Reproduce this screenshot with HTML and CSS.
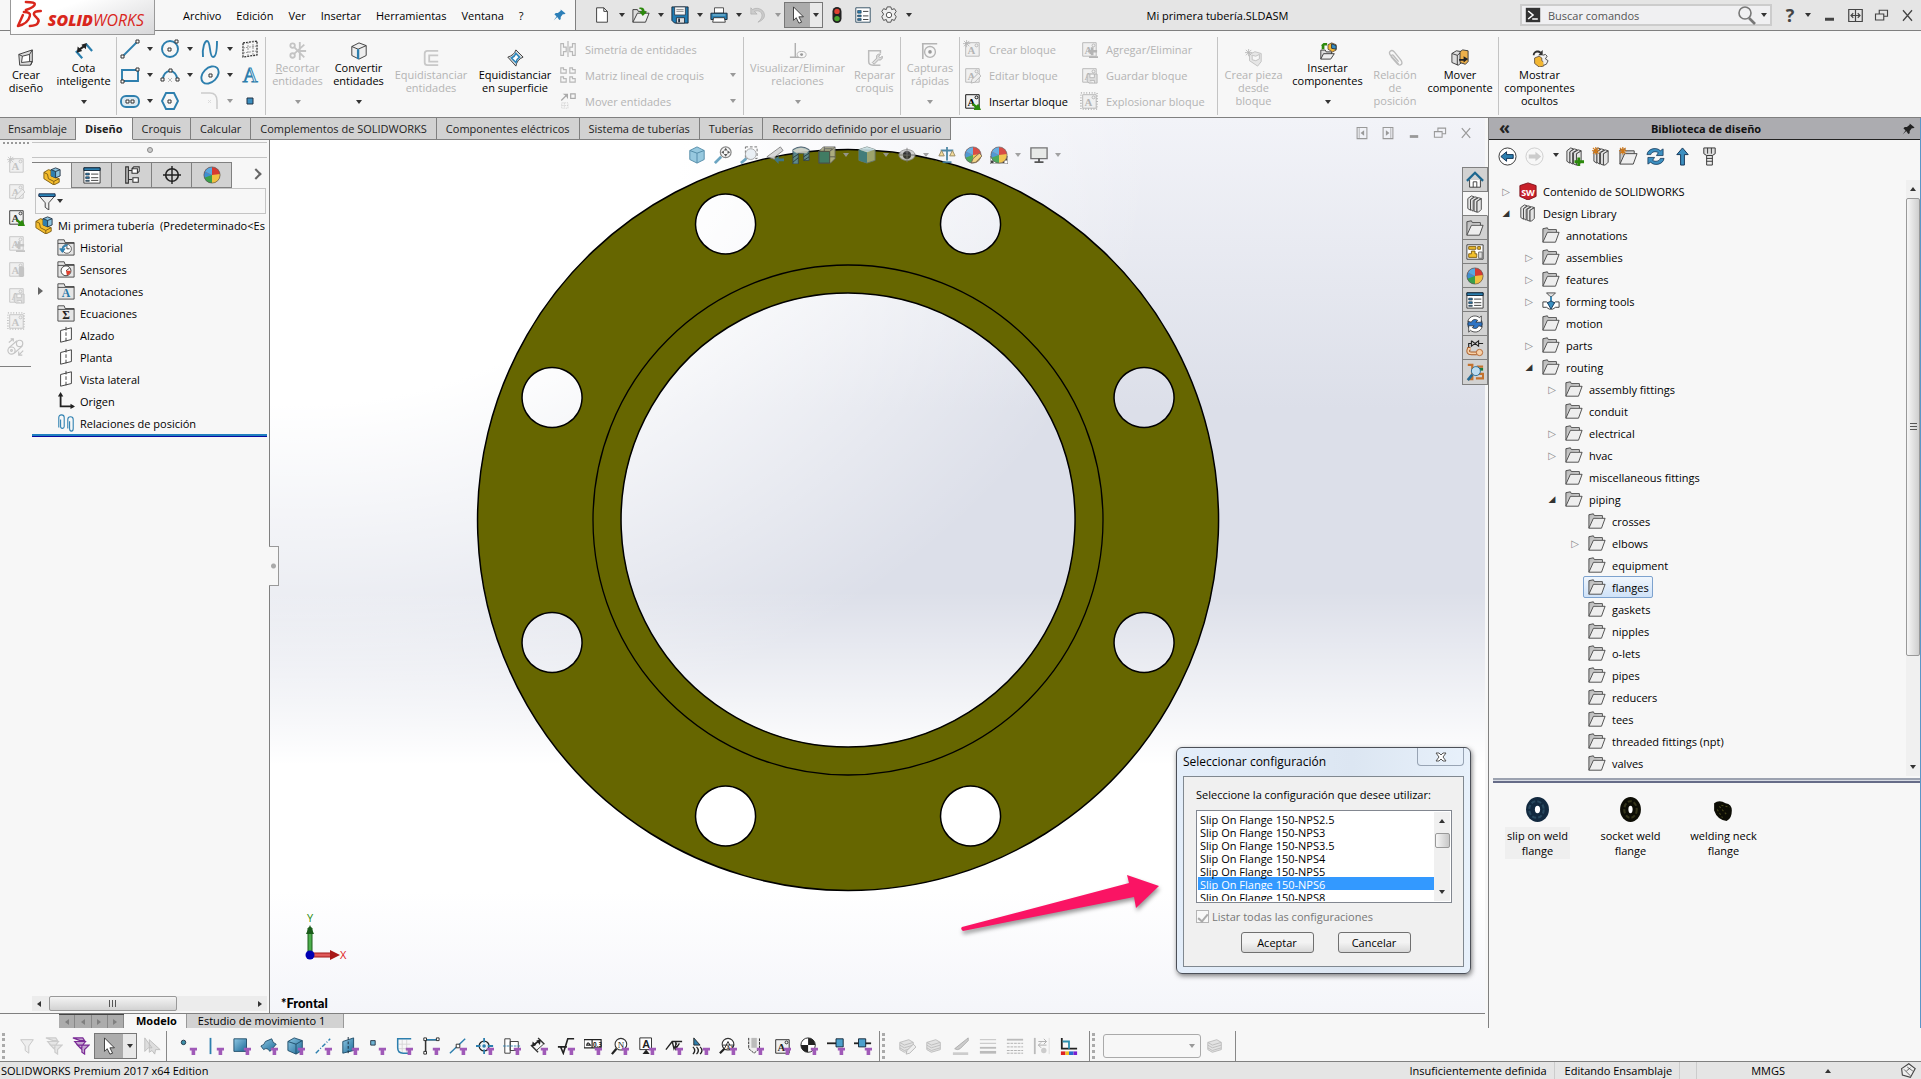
FILE: index.html
```html
<!DOCTYPE html>
<html lang="es">
<head>
    <meta charset="UTF-8">
    <meta name="viewport" content="width=device-width, initial-scale=1.0">
    <title>Mi primera tubería.SLDASM</title>
    <link rel="stylesheet" href="styles.css">
</head>
<body>

<svg class="gradients" aria-hidden="true">
  <defs>
    <linearGradient id="gblue" x1="0" y1="0" x2="1" y2="1"><stop offset="0" stop-color="#8fc8e4"/><stop offset="1" stop-color="#1c6a97"/></linearGradient>
    <linearGradient id="ggray" x1="0" y1="0" x2="1" y2="1"><stop offset="0" stop-color="#b5b5b5"/><stop offset="1" stop-color="#f4f4f4"/></linearGradient>
  </defs>
</svg>

<!-- icon sprite -->
<svg class="sprite" aria-hidden="true">
  <symbol id="pin" viewBox="0 0 20 20"><path d="M11 2l7 6-2 1-2 0-3 4 0 3-2 1-3-4-5 5 4-6-3-3 2-2h3l4-3z" fill="currentColor"/></symbol>
  <symbol id="new" viewBox="0 0 20 20"><path d="M4 2h8l4 4v12H4z" fill="#fff" stroke="#333"/><path d="M12 2v4h4" fill="none" stroke="#333"/></symbol>
  <symbol id="open" viewBox="0 0 20 20"><path d="M1 18V4h5l1 2h8v3" fill="#ddd" stroke="#333"/><path d="M1 18l5-10h13l-4 10z" fill="#eee" stroke="#333"/><path d="M8 2c4-1 6 1 6 4h3l-5 5-4-5h3c0-2-1-3-3-3z" fill="#2c8a0c"/></symbol>
  <symbol id="save" viewBox="0 0 20 20"><path d="M1 1h18v18H4l-3-3z" fill="#1f7cb4" stroke="#123"/><path d="M4 1h12v9H4z" fill="#f5f5f5" stroke="#345"/><path d="M6 4h8M6 6h8" stroke="#888"/><path d="M6 13h9v6H6z" fill="#ddd" stroke="#234"/><path d="M8 14h2v4H8z" fill="#234"/></symbol>
  <symbol id="print" viewBox="0 0 20 20"><path d="M5 2h10v6H5z" fill="#fff" stroke="#444"/><path d="M1 8h18v7H1z" fill="#2a80b3" stroke="#123"/><path d="M4 13h12l1 5H3z" fill="#fff" stroke="#333"/><path d="M3 10h14" stroke="#9cd"/></symbol>
  <symbol id="undo" viewBox="0 0 20 20"><path d="M2 2v7h7L6 6c5-2 10 1 8 7-1 2-2 3-4 5 5-2 8-5 7-9-1-6-9-8-13-5z" fill="#ccc" stroke="#aaa" stroke-width=".7"/></symbol>
  <symbol id="cursor" viewBox="0 0 20 20"><path d="M5 1v15l3-3 3 6 3-1-3-6h5z" fill="#fff" stroke="#333"/></symbol>
  <symbol id="traffic" viewBox="0 0 20 20"><rect x="5" y="1" width="10" height="18" rx="5" fill="#222"/><circle cx="10" cy="6" r="3" fill="#e04030"/><circle cx="10" cy="14" r="3" fill="#4aa62e"/></symbol>
  <symbol id="props" viewBox="0 0 20 20"><path d="M2 2h16v16H2z" fill="#fff" stroke="#2b4a5e"/><path d="M4 5h4v3H4zM4 10h4v2H4zM4 14h4v2H4z" fill="#2c7fb0" stroke="#123" stroke-width=".6"/><path d="M10 6h6M10 11h6M10 15h6" stroke="#333"/></symbol>
  <symbol id="gear" viewBox="0 0 20 20"><path d="M8 1h4l1 3 3-1 2 3-2 3 2 3-2 4-3-1-1 3H8l-1-3-3 1-2-4 2-3-2-3 2-3 3 1z" fill="#eee" stroke="#444"/><circle cx="10" cy="10" r="3" fill="#fff" stroke="#444"/></symbol>
  <symbol id="mag" viewBox="0 0 20 20"><circle cx="8" cy="8" r="6" fill="none" stroke="#777" stroke-width="1.6"/><path d="M12 13l6 6" stroke="#777" stroke-width="2.6"/></symbol>
  <symbol id="cmd" viewBox="0 0 20 20"><path d="M1 1h18v18H1z" fill="#333"/><path d="M4 5l6 5-6 5M9 15h7" fill="none" stroke="#fff" stroke-width="2"/></symbol>
  <symbol id="wmin" viewBox="0 0 20 20"><path d="M4 13h12v4H4z" fill="currentColor"/></symbol>
  <symbol id="wrest" viewBox="0 0 20 20"><path d="M7 8V3h11v8h-5M2 8h11v8H2z" fill="none" stroke="currentColor" stroke-width="1.5"/></symbol>
  <symbol id="wclose" viewBox="0 0 20 20"><path d="M4 3l12 14M16 3L4 17" stroke="currentColor" stroke-width="1.7"/></symbol>
  <symbol id="wspan" viewBox="0 0 20 20"><path d="M1 2h18v16H1zM10 2v16M4 10h12M7 7l-3 3 3 3M13 7l3 3-3 3" fill="none" stroke="currentColor" stroke-width="1.6"/></symbol>
  <symbol id="wleft" viewBox="0 0 20 20"><path d="M3 2h14v16H3z" fill="none" stroke="currentColor" stroke-width="1.5"/><path d="M6 3v14" stroke="currentColor"/><path d="M13 6v8l-5-4z" fill="currentColor"/></symbol>
  <symbol id="wright" viewBox="0 0 20 20"><path d="M3 2h14v16H3z" fill="none" stroke="currentColor" stroke-width="1.5"/><path d="M14 3v14" stroke="currentColor"/><path d="M7 6v8l5-4z" fill="currentColor"/></symbol>

  <!-- ribbon -->
  <symbol id="sketch" viewBox="0 0 20 20"><path d="M2 6l15-5v13l-2 4H3z" fill="#ddd" stroke="#333"/><path d="M6 8l8-2v8l-9 1z" fill="#fff" stroke="#333"/><path d="M15 18l2-4-3 0M2 6l4 2M17 1l-3 5" stroke="#333" fill="none"/></symbol>
  <symbol id="dim" viewBox="0 0 20 20"><path d="M1 10l7 8M12 2l7 8" stroke="#2b7fae" stroke-width="2.4"/><path d="M4 9l7-5" stroke="#222" stroke-width="2.4"/><path d="M2 12l1-7 5 5zM13 1l-1 7-5-5z" fill="#222"/></symbol>
  <symbol id="line" viewBox="0 0 20 20"><path d="M3 17L17 3" stroke="#2d7fae" stroke-width="1.8"/><path d="M1 16h3v3H1zM16 1h3v3h-3z" fill="#fff" stroke="#333"/></symbol>
  <symbol id="circle" viewBox="0 0 20 20"><circle cx="10" cy="10" r="8" fill="none" stroke="#2d7fae" stroke-width="1.9"/><path d="M8 9h3v3H8zM15 1h3v3h-3z" fill="#fff" stroke="#333"/></symbol>
  <symbol id="spline" viewBox="0 0 20 20"><path d="M3 18C2 8 5 2 7 2c4 0 2 16 6 16 3 0 4-8 4-16" fill="none" stroke="#2d7fae" stroke-width="1.9"/></symbol>
  <symbol id="plane" viewBox="0 0 20 20"><path d="M3 4l14-2v14L3 18z" fill="none" stroke="#333" stroke-width="1.3" stroke-dasharray="2 1"/><path d="M8 3v15M13 2v15M3 9l14-2M3 14l14-2" fill="none" stroke="#999" stroke-dasharray="2 1"/></symbol>
  <symbol id="rect" viewBox="0 0 20 20"><path d="M2 5h16v11H2z" fill="none" stroke="#2d7fae" stroke-width="1.9"/><path d="M1 15h3v3H1zM16 3h3v3h-3z" fill="#fff" stroke="#333"/></symbol>
  <symbol id="arc" viewBox="0 0 20 20"><path d="M3 14a7 8 0 0 1 14 0" fill="none" stroke="#2d7fae" stroke-width="1.9"/><path d="M1 13h3v3H1zM16 13h3v3h-3zM9 4h3v3H9z" fill="#fff" stroke="#333"/><path d="M8 13l4 4M12 13l-4 4" stroke="#bbb"/></symbol>
  <symbol id="ellipse" viewBox="0 0 20 20"><ellipse cx="10" cy="10" rx="10" ry="7" transform="rotate(-45 10 10)" fill="none" stroke="#2d7fae" stroke-width="1.9"/><path d="M9 9h3v3H9z" fill="#fff" stroke="#333"/></symbol>
  <symbol id="letter" viewBox="0 0 20 20"><text x="10" y="17" text-anchor="middle" font-size="21" font-family="Liberation Serif, serif" fill="#fff" stroke="#2d7fae">A</text></symbol>
  <symbol id="slot" viewBox="0 0 20 20"><rect x="1" y="5" width="18" height="11" rx="5" fill="#dceaf2" stroke="#2d7fae" stroke-width="1.9"/><path d="M6 9h3v3H6zM11 9h3v3h-3z" fill="#fff" stroke="#333"/></symbol>
  <symbol id="hexa" viewBox="0 0 20 20"><path d="M6 2h8l4 8-4 8H6l-4-8z" fill="none" stroke="#2d7fae" stroke-width="1.9"/><path d="M8 9h3v3H8z" fill="#fff" stroke="#333"/></symbol>
  <symbol id="fillet" viewBox="0 0 20 20"><path d="M1 2h9c5 0 7 3 7 8v8" fill="none" stroke="#ccc" stroke-width="1.6"/><path d="M8 9l3 3M11 9l-3 3" stroke="#ddd"/></symbol>
  <symbol id="point" viewBox="0 0 20 20"><path d="M7 7h6v6H7z" fill="#3c8fc0" stroke="#234"/></symbol>
  <symbol id="trim" viewBox="0 0 20 20"><g fill="none" stroke="#c4c4c4" stroke-width="2"><circle cx="4" cy="4" r="2.5"/><circle cx="4" cy="15" r="2.5"/><path d="M6 6l11 11M6 13L17 3M12 0v20M10 10h9"/></g></symbol>
  <symbol id="convert" viewBox="0 0 20 20"><path d="M2 5l8-4 8 3v11l-8 4-8-4z" fill="#eee" stroke="#333"/><path d="M2 5l7 3 9-4" fill="none" stroke="#333"/><path d="M9 8v11" stroke="#2d7fae" stroke-width="2.6"/></symbol>
  <symbol id="offset" viewBox="0 0 20 20"><path d="M18 2H6Q3 2 3 5v10q0 3 3 3h12M18 7H8v7h10" fill="none" stroke="#c8c8c8" stroke-width="2"/></symbol>
  <symbol id="surf" viewBox="0 0 20 20"><path d="M2 9Q9 7 11 1l8 8q-7 3-8 10z" fill="#ddd" stroke="#333"/><path d="M6 10q4-2 5-5l4 4q-3 2-4 6z" fill="#fff" stroke="#2d86bb" stroke-width="1.8"/></symbol>
  <symbol id="mirror" viewBox="0 0 20 20"><path d="M10 1v18M2 4h3v4h3v5H5v4H2zM18 4h-3v4h-3v5h3v4h3z" fill="none" stroke="#b8b8b8" stroke-width="1.3"/></symbol>
  <symbol id="pattern" viewBox="0 0 20 20"><path d="M2 2h3v2h3v4H2zM12 2h3v2h3v4h-6zM2 12h3v2h3v4H2zM12 12h3v2h3v4h-6z" fill="none" stroke="#b8b8b8" stroke-width="1.3"/></symbol>
  <symbol id="move" viewBox="0 0 20 20"><path d="M2 9l5-5-3-2h6v6L8 5l-5 5z" fill="#aaa"/><path d="M13 2h5v5h-5z" fill="none" stroke="#aaa" stroke-width="1.3"/><path d="M3 12h7v6H3zM6 12v6M3 15h7" fill="none" stroke="#ccc" stroke-dasharray="1 1"/></symbol>
  <symbol id="relat" viewBox="0 0 20 20"><path d="M7 1v15M1 17h13" stroke="#b0b0b0" stroke-width="1.6"/><ellipse cx="14" cy="14" rx="5" ry="3.5" fill="#f7f7f7" stroke="#b0b0b0"/><circle cx="14" cy="14" r="1.6" fill="#999"/></symbol>
  <symbol id="repair" viewBox="0 0 20 20"><path d="M16 5V2H3v12q0 4 5 4h8" fill="none" stroke="#bcbcbc" stroke-width="1.7"/><path d="M7 15l5-5c-1-3 1-5 4-4l-2 2 2 2 2-2c1 3-2 5-4 4l-5 5z" fill="#ddd" stroke="#aaa"/></symbol>
  <symbol id="snap" viewBox="0 0 20 20"><path d="M1 2h17M2 2v17" stroke="#b4b4b4" stroke-width="1.8"/><circle cx="10" cy="11" r="6" fill="none" stroke="#b4b4b4" stroke-width="1.5"/><circle cx="10" cy="11" r="2" fill="#999"/></symbol>
  <symbol id="blk" viewBox="0 0 20 20"><path d="M3 3h15v15H3z" fill="#f0f0f0" stroke="currentColor"/><text x="5" y="16" font-size="12" font-weight="700" font-family="Liberation Serif, serif" fill="currentColor">A</text><circle cx="15" cy="6" r="1.6" fill="none" stroke="currentColor"/></symbol>
  <symbol id="star" viewBox="0 0 20 20"><path d="M4 0v8M0 4h8M1 1l6 6M7 1L1 7" stroke="currentColor" stroke-width=".9"/></symbol>
  <symbol id="pencil" viewBox="0 0 20 20"><path d="M9 19l1-4 7-7 3 3-7 7z" fill="#eee" stroke="currentColor"/></symbol>
  <symbol id="garrow" viewBox="0 0 20 20"><path d="M11 12l4 3 2-2 3 7h-8l1-3-3-3z" fill="#2c8a0c"/></symbol>
  <symbol id="plus" viewBox="0 0 20 20"><path d="M12 8h3v3h4v3h-4v3h-3v-3H9v-3h3zM10 18h10v2H10z" fill="currentColor"/></symbol>
  <symbol id="disk" viewBox="0 0 20 20"><path d="M8 9h11v10H10l-2-2z" fill="#ddd" stroke="currentColor"/><path d="M11 9h5v4h-5zM11 16h5v3" fill="#f7f7f7" stroke="currentColor"/></symbol>
  <symbol id="lamp" viewBox="0 0 20 20"><rect x="13" y="7" width="6" height="12" rx="2" fill="currentColor"/></symbol>
  <symbol id="burst" viewBox="0 0 20 20"><path d="M1 1h18v18H1z" fill="none" stroke="currentColor" stroke-width="2" stroke-dasharray="1 2"/></symbol>
  <symbol id="belt" viewBox="0 0 20 20"><g fill="none" stroke="currentColor" stroke-width="1.3"><circle cx="5" cy="14" r="4"/><circle cx="5" cy="14" r="1"/><circle cx="14" cy="6" r="3.5"/><path d="M2 11l9-8M8 17l9-8M2 5l5-4M4 1h3v3M13 19l5-5M13 15v4h4"/></g></symbol>
  <symbol id="piece" viewBox="0 0 20 20"><path d="M5 6l6-3 7 2v9l-4 5-9-6z" fill="#e6e6e6" stroke="#c0c0c0"/><path d="M8 7l4 1 4-2v5l-4 2-4-1z" fill="#f7f7f7" stroke="#c0c0c0"/></symbol>
  <symbol id="insert" viewBox="0 0 20 20"><path d="M2 19V9h5l1 2h6v3" fill="#ddd" stroke="#333"/><path d="M2 19l3-6h12l-4 6z" fill="#eee" stroke="#333"/><path d="M3 8V4H2l3-3h4v3H6v4z" fill="#2c8a0c"/><path d="M10 3l4-2 5 2v6l-4 2-5-3z" fill="#f2b632" stroke="#654"/><path d="M14 2l5 2v4l-5-1z" fill="#3a8fc4" stroke="#234"/></symbol>
  <symbol id="clip" viewBox="0 0 20 20"><path d="M14 17L5 7c-3-4 1-7 4-4l8 10c2 4-1 6-4 4L6 9c-1-2 1-3 2-2l6 7" fill="none" stroke="#bcbcbc" stroke-width="1.5"/></symbol>
  <symbol id="movec" viewBox="0 0 20 20"><path d="M1 5l5-3 6 1v12l-4 3-7-3z" fill="#ddd" stroke="#333"/><path d="M1 5l6 2 5-4M7 7v11" fill="none" stroke="#333"/><path d="M10 3l3-2 6 1v12l-3 3-6-2z" fill="#edb04a" stroke="#333"/><path d="M9 11h5V8l5 3-5 4v-2H9z" fill="#222"/></symbol>
  <symbol id="showc" viewBox="0 0 20 20"><path d="M2 7c0-5 6-7 9-4l2-2v6H8l2-2C7 3 4 4 4 7z" fill="#333"/><path d="M4 10l5-2 3 2v3l3 2-1 4-5 1-5-4z" fill="#f2b632" stroke="#654"/><path d="M13 7l3-1 2 2-2 3 3 2-2 4-3 1" fill="#eee" stroke="#444"/></symbol>

  <!-- feature tree -->
  <symbol id="asm" viewBox="0 0 20 20"><path d="M1 6l5-3 4 1v6l8 3v4l-6 3-11-7z" fill="#f4bd2e" stroke="#7a5a10"/><path d="M1 6l4 2 1 5 6 3 6-3M12 16v4" fill="none" stroke="#7a5a10"/><path d="M9 3l5-2 5 2v7l-5 2-5-2z" fill="#8cc4e0" stroke="#234"/><path d="M9 3l5 2v7l-5-2z" fill="#2f7fae"/><path d="M9 3l5 2 5-2M14 5v7" fill="none" stroke="#234"/></symbol>
  <symbol id="proplist" viewBox="0 0 20 20"><path d="M1 2h18v17H1z" fill="#fff" stroke="#333"/><path d="M1 2h18v3H1z" fill="#2c7fb0" stroke="#123"/><path d="M3 8h4v2H3zM3 12h4v2H3zM3 16h4v1H3z" fill="#2c7fb0" stroke="#123" stroke-width=".7"/><path d="M9 9h8M9 13h8M9 16h8" stroke="#333"/></symbol>
  <symbol id="config" viewBox="0 0 20 20"><path d="M3 1h3v18H3zM6 5h4M6 15h4" fill="#bbb" stroke="#333" stroke-width="1.2"/><path d="M10 3h6v5h-6zM10 3l2-2h6v5l-2 2M11 13h6v5h-6z" fill="#fff" stroke="#333" stroke-width="1.2"/></symbol>
  <symbol id="target" viewBox="0 0 20 20"><circle cx="10" cy="10" r="7" fill="none" stroke="#222" stroke-width="1.8"/><path d="M10 0v20M0 10h20" stroke="#222" stroke-width="1.6"/></symbol>
  <symbol id="ball" viewBox="0 0 20 20"><circle cx="10" cy="10" r="9" fill="#d63a32"/><path d="M10 10L2 6a9 9 0 0 0 3 11.500z" fill="#3f8fd0"/><path d="M10 10v9a9 9 0 0 1-8.500-6z" fill="#3aa04a"/><path d="M10 10l9-1a9 9 0 0 1-9 10z" fill="#f0c040"/><path d="M10 10L2 6a9 9 0 0 1 8-5z" fill="#58a8e0"/><circle cx="10" cy="10" r="9" fill="none" stroke="#555" stroke-width=".7"/></symbol>
  <symbol id="funnel" viewBox="0 0 20 20"><path d="M1 4h18l-7 8v8l-4-3v-5z" fill="#eee" stroke="#333"/><path d="M1 2h18v3H1z" fill="#2c86ba" stroke="#124"/></symbol>
  <symbol id="fold" viewBox="0 0 20 20"><path d="M1 19V2h7l1 3h10v14z" fill="#e6e6e6" stroke="#444"/><path d="M1 6h18" stroke="#444"/></symbol>
  <symbol id="hist" viewBox="0 0 20 20"><circle cx="11" cy="12" r="5" fill="#fff" stroke="#555"/><path d="M11 9v3h3" stroke="#333" fill="none"/><path d="M3 12h6l-3 4zM6 12c0-4 4-5 6-4" fill="#2c7fb0" stroke="#2c7fb0"/></symbol>
  <symbol id="sens" viewBox="0 0 20 20"><circle cx="10" cy="12" r="5.500" fill="#fff" stroke="#333"/><path d="M10 12l4-3" stroke="#333"/><path d="M10 12l5 0a5 5 0 0 1-4 5z" fill="#e0402e"/></symbol>
  <symbol id="anno" viewBox="0 0 20 20"><text x="10" y="17" text-anchor="middle" font-size="13" font-weight="700" font-family="Liberation Serif, serif" fill="#2477a8">A</text></symbol>
  <symbol id="sigma" viewBox="0 0 20 20"><text x="10" y="17" text-anchor="middle" font-size="13" font-weight="700" font-family="Liberation Serif, serif" fill="#222">Σ</text></symbol>
  <symbol id="refplane" viewBox="0 0 20 20"><path d="M4 5l12-3v13L4 18z" fill="#fff" stroke="#333"/><path d="M10 1v18" stroke="#333" stroke-dasharray="4 2"/></symbol>
  <symbol id="origin" viewBox="0 0 20 20"><path d="M4 3v13h14" fill="none" stroke="#222" stroke-width="2"/><path d="M1 5l3-5 3 5zM15 13l5 3-5 3z" fill="#222"/></symbol>
  <symbol id="mates" viewBox="0 0 20 20"><path d="M2 15V4q0-3 3-3t3 3v10q0 2-2 2t-2-2V6M12 16V6q0-3 3-3t3 3v10q0 3-2 3t-2-3V8" fill="none" stroke="#2c7fb0" stroke-width="1.200"/></symbol>

  <!-- view toolbar -->
  <symbol id="cube" viewBox="0 0 20 20"><path d="M2 5l8-4 8 4v10l-8 4-8-4z" fill="#8cc4dc" stroke="#3c7c9c"/><path d="M2 5l8 3 8-3M10 8v11" fill="none" stroke="#3c7c9c"/></symbol>
  <symbol id="zfit" viewBox="0 0 20 20"><circle cx="13" cy="7" r="6" fill="#f5f5f5" stroke="#777" stroke-width="1.300"/><path d="M13 2l2 3h-4zM13 12l2-3h-4zM8 7l3-2v4zM18 7l-3-2v4z" fill="#444"/><path d="M8 12l-7 7" stroke="#5c9cbc" stroke-width="3"/></symbol>
  <symbol id="zarea" viewBox="0 0 20 20"><path d="M6 1h13v13H6z" fill="none" stroke="#555" stroke-dasharray="3 2"/><circle cx="12" cy="9" r="6" fill="#e8eef4" stroke="#999"/><path d="M7 14l-6 5" stroke="#5c9cbc" stroke-width="3"/></symbol>
  <symbol id="prev" viewBox="0 0 20 20"><path d="M1 12L16 1l3 4-9 7 0 3z" fill="#d4d4d4" stroke="#777"/><path d="M9 15l5-4v3h6v3h-6v3z" fill="#3d7890"/></symbol>
  <symbol id="section" viewBox="0 0 20 20"><path d="M1 4q9-6 18 0v12h-6V8H7v12H1z" fill="#5f8f98" stroke="#345"/><path d="M1 5q9-6 18 0l-3 3H5z" fill="#c8ccc0"/><path d="M1 13l6-4M1 18l6-5M13 12l6-4M13 16l6-4" stroke="#234"/></symbol>
  <symbol id="vorient" viewBox="0 0 20 20"><path d="M1 6l5-5h13v13l-5 5H1z" fill="#b4b48c" stroke="#666"/><path d="M1 6h12v13H1z" fill="#3e7f6e" stroke="#444"/><path d="M13 6l6-5M13 12h6M7 1v5M7 3h9" stroke="#555"/></symbol>
  <symbol id="disp" viewBox="0 0 20 20"><path d="M1 4l9-3 9 3v12l-9 3-9-3z" fill="#a4aa78" stroke="#677"/><path d="M1 4l9 3v12l-9-3z" fill="#3f7f88"/><path d="M1 4l9-3 9 3-9 3z" fill="#c4dce0"/></symbol>
  <symbol id="eye" viewBox="0 0 20 20"><ellipse cx="10" cy="10" rx="9" ry="6" fill="#ccc" stroke="#888"/><circle cx="10" cy="10" r="4.500" fill="#333"/><path d="M10 2v16M1 10h18" stroke="#777"/></symbol>
  <symbol id="scale" viewBox="0 0 20 20"><path d="M10 1v15M3 5h14" stroke="#3c7c9c" stroke-width="2"/><path d="M1 11l3-6 3 6zM13 11l3-6 3 6z" fill="#f3d890" stroke="#8a7a50"/><path d="M5 17h10v2H5z" fill="#3c7c9c"/></symbol>
  <symbol id="checker" viewBox="0 0 20 20"><path d="M0 12h20v8H0z" fill="#fff" stroke="#555"/><path d="M1 16h3v3H1zM7 16h3v3H7zM13 16h3v3h-3zM4 13h3v3H4zM16 13h3v3h-3z" fill="#333"/></symbol>
  <symbol id="ypen" viewBox="0 0 20 20"><path d="M8 19l2-5 7-6 3 3-7 7z" fill="#f4d078" stroke="#654"/></symbol>
  <symbol id="screen" viewBox="0 0 20 20"><path d="M1 2h18v12H1z" fill="#e6e8e6" stroke="#666" stroke-width="1.500"/><path d="M10 14v3M5 18h10" stroke="#444" stroke-width="2"/></symbol>

  <!-- library -->
  <symbol id="back" viewBox="0 0 20 20"><circle cx="10" cy="10" r="9" fill="#fff" stroke="#333"/><path d="M3 10l6-5v3h7v4H9v3z" fill="#2c7fb0" stroke="#135"/></symbol>
  <symbol id="fwd" viewBox="0 0 20 20"><circle cx="10" cy="10" r="9" fill="#f7f7f7" stroke="#ccc"/><path d="M17 10l-6-5v3H4v4h7v3z" fill="#ccc"/></symbol>
  <symbol id="books" viewBox="0 0 20 20"><g fill="#e4e4e4" stroke="#444"><path d="M12 7l5-3v12l-3 3h-2z"/><path d="M12 7l5-3-3-1-5 3v12l3 1z"/><path d="M8 6l5-3-3-1-5 3v11l3 2z"/><path d="M5 5l4-3-3-1-4 3v11l3 2z"/></g></symbol>
  <symbol id="gplus" viewBox="0 0 20 20"><path d="M13 11h3v3h4v3h-4v3h-3v-3h-3v-3h3z" fill="#2c8a0c"/></symbol>
  <symbol id="spark" viewBox="0 0 20 20"><path d="M4 0v8M0 4h8M1 1l6 6M7 1L1 7" stroke="#d07818" stroke-width="1.200"/></symbol>
  <symbol id="folder" viewBox="0 0 20 20"><path d="M1 18V3l5-1 1 2h9v3" fill="url(#ggray)" stroke="#444"/><path d="M1 18L6 7h13l-4 11z" fill="#eee" stroke="#444"/></symbol>
  <symbol id="sync" viewBox="0 0 20 20"><path d="M1 8C2 1 12 0 15 4l3-2v7h-7l2-3C10 4 6 5 5 8zM19 12c-1 7-11 8-14 4l-3 2v-7h7l-2 3c3 2 7 1 8-2z" fill="#3c8fc0" stroke="#135" stroke-width=".8"/></symbol>
  <symbol id="globe" viewBox="0 0 20 20"><circle cx="10" cy="10" r="8" fill="#2f74c4" stroke="#123"/><path d="M2 7C4 0 12 0 15 3l2-2v7h-6l2-2c-3-2-6-1-7 2zM18 13c-2 7-10 7-13 4l-2 2v-7h6l-2 2c3 2 6 1 7-2z" fill="#fff" stroke="#222" stroke-width=".8"/></symbol>
  <symbol id="up" viewBox="0 0 20 20"><path d="M10 1l6 7h-4v11H8V8H4z" fill="#3c8fc0" stroke="#135"/></symbol>
  <symbol id="bolt" viewBox="0 0 20 20"><path d="M4 1h12v6l-3 2H7L4 7z" fill="#ddd" stroke="#333"/><path d="M7 9h6v10H7zM7 12h6M7 15h6M8 1v6M12 1v6" fill="#eee" stroke="#333"/></symbol>
  <symbol id="sw" viewBox="0 0 20 20"><path d="M1 4l9-3 9 3v12l-9 4-9-4z" fill="#c8202a" stroke="#7c1018"/><text x="10" y="15" text-anchor="middle" font-size="10" font-weight="700" font-family="Open Sans, sans-serif" fill="#fff">SW</text></symbol>
  <symbol id="form" viewBox="0 0 20 20"><path d="M5 1h10l-4 4H9z" fill="#ddd" stroke="#444"/><path d="M10 5v5" stroke="#2c7fb0" stroke-width="2"/><path d="M1 11h4l3 2h4l3-2h4v6h-4l-3 2H8l-3-2H1z" fill="#fff" stroke="#333"/><path d="M6 12l4 7 4-7-4-2z" fill="#3c8fc0" stroke="#135"/></symbol>
  <symbol id="home" viewBox="0 0 20 20"><path d="M4 10v8h12v-8" fill="#fff" stroke="#333"/><path d="M8 18v-6h4v6" fill="none" stroke="#333"/><path d="M1 11l9-9 9 9" fill="none" stroke="#1d678f" stroke-width="2.500"/></symbol>
  <symbol id="palette" viewBox="0 0 20 20"><path d="M1 2h18v16H1z" fill="#fff" stroke="#333"/><path d="M3 4h8v3H3zM13 4h3v3h-3zM6 9h4v3h2v4H3v-4h3z" fill="#f2c12e" stroke="#7a5a10"/><path d="M14 10h4v7h-4z" fill="#ddd" stroke="#666"/></symbol>
  <symbol id="pipe" viewBox="0 0 20 20"><path d="M3 9V5h3M6 2v6l8-6v6L6 2M14 5h5" fill="none" stroke="#222" stroke-width="1.200"/><path d="M5 11H3q-2 5 3 5h6" fill="none" stroke="#a85a24" stroke-width="4"/><path d="M5 11H3q-2 5 3 5h6" fill="none" stroke="#f6d0a8" stroke-width="2"/><circle cx="15" cy="15" r="3.500" fill="#f6d0a8" stroke="#b0602a"/></symbol>
  <symbol id="pfind" viewBox="0 0 20 20"><path d="M2 2h5v16H2M12 4h7M12 12h7v5h-8" fill="none" stroke="#c4722e" stroke-width="2.500"/><path d="M13 7h6" stroke="#1d7a3a" stroke-width="3"/><circle cx="11" cy="9" r="5" fill="#bcdcf0" stroke="#246a94"/><path d="M7 13l-5 6" stroke="#246a94" stroke-width="3"/></symbol>
  <symbol id="flg1" viewBox="0 0 24 24"><ellipse cx="12" cy="12" rx="11" ry="12" fill="#12293f"/><ellipse cx="11" cy="12" rx="7" ry="8" fill="none" stroke="#28485e" stroke-width="2" stroke-dasharray="4 2"/><ellipse cx="12" cy="12" rx="2.500" ry="3.500" fill="#fff"/></symbol>
  <symbol id="flg2" viewBox="0 0 24 24"><ellipse cx="12" cy="12" rx="10" ry="12" fill="#0d0d05"/><ellipse cx="12" cy="12" rx="6" ry="8" fill="none" stroke="#34341a" stroke-width="2" stroke-dasharray="4 2"/><ellipse cx="12" cy="12" rx="2" ry="3.500" fill="#fff"/></symbol>
  <symbol id="flg3" viewBox="0 0 24 24"><path d="M3 6q5-4 11 0 6 1 6 7 0 8-5 10Q6 22 3 13z" fill="#0d0d05"/><path d="M8 9l7 8M10 8l8 2M6 12l5 8" stroke="#4c4c1c" stroke-dasharray="2 2"/></symbol>

  <!-- selection filters -->
  <symbol id="fn" viewBox="0 0 20 20"><path d="M12 12h8v3h-2v5h-4v-5h-2z" fill="#a05ab8"/></symbol>
  <symbol id="f0" viewBox="0 0 20 20"><path d="M3 3h14l-5 7v8l-4-3v-5z" fill="#eee" stroke="#c4c4c4"/></symbol>
  <symbol id="f3" viewBox="0 0 20 20"><path d="M1 1h11l2 3h-5zM3 5h12l-4 5v2H9zM6 9h13l-5 5v5l-3-2v-3z" fill="currentColor" stroke="currentColor" stroke-width="1.300" fill-opacity=".4"/></symbol>
  <symbol id="curs2" viewBox="0 0 20 20"><path d="M2 1v15l4-4h4zM7 3v14l3-2 3 4 1-5h5z" fill="#ddd" stroke="#bbb"/></symbol>
  <symbol id="vtx" viewBox="0 0 20 20"><circle cx="5" cy="6" r="2.500" fill="#3c8fa8" stroke="#234"/></symbol>
  <symbol id="edge" viewBox="0 0 20 20"><path d="M5 1v18" stroke="#2d7fae" stroke-width="2"/></symbol>
  <symbol id="face" viewBox="0 0 20 20"><path d="M1 2h14v14H1z" fill="url(#gblue)" stroke="#1c4a66"/></symbol>
  <symbol id="sbody" viewBox="0 0 20 20"><path d="M1 10q4-1 5-5l7-3q1 5 5 6l-7 8q-3-5-7-2z" fill="url(#gblue)" stroke="#1c4a66"/></symbol>
  <symbol id="solid" viewBox="0 0 20 20"><path d="M1 5l7-4 9 3v11l-7 4-9-4z" fill="url(#gblue)" stroke="#1c4a66"/><path d="M1 5l9 3 7-4M10 8v11" fill="none" stroke="#1c4a66"/></symbol>
  <symbol id="axis" viewBox="0 0 20 20"><path d="M2 18L18 2" stroke="#2d7fae" stroke-width="1.600" stroke-dasharray="5 2 1 2"/></symbol>
  <symbol id="fplane" viewBox="0 0 20 20"><path d="M2 5l12-4v14L2 18z" fill="url(#gblue)" stroke="#1c4a66"/><path d="M8 0v20" stroke="#123" stroke-dasharray="3 2"/></symbol>
  <symbol id="fpt" viewBox="0 0 20 20"><path d="M3 4h5v5H3z" fill="#6fb3d3" stroke="#234"/></symbol>
  <symbol id="fsk" viewBox="0 0 20 20"><path d="M8 3v14M13 3v14M4 8h13M4 13h13" stroke="#d4d4d4"/><path d="M18 2H3v10q0 6 6 6h6" fill="none" stroke="#2d7fae" stroke-width="1.700"/></symbol>
  <symbol id="fseg" viewBox="0 0 20 20"><path d="M4 18V3h13" fill="none" stroke="#333" stroke-width="1.700"/><path d="M5 3h12" stroke="#2d7fae" stroke-width="1.600"/><path d="M2 1h3v3H2zM16 1h3v3h-3zM2 16h3v3H2z" fill="#fff" stroke="#222"/></symbol>
  <symbol id="fmid" viewBox="0 0 20 20"><path d="M1 18L18 2" stroke="#2d7fae" stroke-width="1.600"/><path d="M8 8h4v4H8z" fill="#fff" stroke="#222"/></symbol>
  <symbol id="fctr" viewBox="0 0 20 20"><circle cx="9" cy="10" r="5.500" fill="#eaf2f6" stroke="#222" stroke-width="1.400"/><circle cx="9" cy="10" r="2" fill="#2d7fae"/><path d="M9 1v5M9 14v5M0 10h5M13 10h6" stroke="#2d7fae" stroke-width="2"/></symbol>
  <symbol id="fcl" viewBox="0 0 20 20"><path d="M2 2h6v16H2zM8 5h9v10H8z" fill="#fff" stroke="#333"/><path d="M0 10h20" stroke="#2d7fae" stroke-dasharray="3 1"/></symbol>
  <symbol id="fdim" viewBox="0 0 20 20"><path d="M1 9l8 8M9 1l7 7" stroke="#333" stroke-width="1.600"/><path d="M7 15l8-7" stroke="#333"/><path d="M4 9l6-5" stroke="#222" stroke-width="2"/><path d="M2 11l1-6 4 4zM12 3l-1 6-4-5z" fill="#222"/></symbol>
  <symbol id="froot" viewBox="0 0 20 20"><path d="M1 11h3l3 7 5-16h7M4 11h7" fill="none" stroke="#222" stroke-width="1.800"/></symbol>
  <symbol id="fgtol" viewBox="0 0 20 20"><path d="M0 3h19v9H0zM9 3v9M3 9q1-5 4 0z" fill="#fff" stroke="#222" stroke-width="1.300"/><text x="10" y="11" font-size="7" font-weight="700" font-family="Open Sans, sans-serif" fill="#222">0.3</text></symbol>
  <symbol id="fmagn" viewBox="0 0 20 20"><circle cx="11" cy="8" r="6.500" fill="#fff" stroke="#333" stroke-width="1.200"/><text x="11" y="12" text-anchor="middle" font-size="10" font-family="Liberation Serif, serif" fill="#222">N</text><path d="M6 13l-5 6" stroke="#222" stroke-width="2.500"/></symbol>
  <symbol id="fobj" viewBox="0 0 20 20"><circle cx="10" cy="8" r="6.500" fill="#fff" stroke="#333" stroke-width="1.200"/><path d="M4 9h13M6 13l4-8 2 4" fill="none" stroke="#222"/><text x="12" y="14" text-anchor="middle" font-size="7" font-weight="700" font-family="Liberation Serif, serif" fill="#222">A1</text><path d="M6 13l-5 5" stroke="#222" stroke-width="2.500"/></symbol>
  <symbol id="fdat" viewBox="0 0 20 20"><path d="M2 1h13v13H2z" fill="#fff" stroke="#222"/><text x="9" y="12" text-anchor="middle" font-size="12" font-weight="700" font-family="Liberation Sans, sans-serif" fill="#222">A</text><path d="M9 14l4 5H5z" fill="#222"/></symbol>
  <symbol id="fweld" viewBox="0 0 20 20"><path d="M1 14l7-9h11M8 5l2 8 3-6M12 5v8l4-6" fill="none" stroke="#222" stroke-width="1.500"/></symbol>
  <symbol id="fbead" viewBox="0 0 20 20"><path d="M2 1v8h7z" fill="#2d7fae" stroke="#222"/><path d="M1 11q4 4 0 8M5 11q4 4 0 8M9 11q4 4 0 8" fill="none" stroke="#222" stroke-width="1.400"/></symbol>
  <symbol id="fcos" viewBox="0 0 20 20"><path d="M3 1v12l6 5 6-5V1" fill="#eee" stroke="#222" stroke-dasharray="3 1"/><path d="M6 1h6v11H6z" fill="#bbb"/></symbol>
  <symbol id="fcm" viewBox="0 0 20 20"><circle cx="9" cy="9" r="8" fill="#fff" stroke="#222"/><path d="M9 9V1a8 8 0 0 1 8 8zM9 9v8a8 8 0 0 1-8-8z" fill="#222"/></symbol>
  <symbol id="fcp1" viewBox="0 0 20 20"><path d="M0 7h11" stroke="#222" stroke-width="2"/><path d="M10 2h8v9h-8z" fill="#4ca0cc" stroke="#123"/></symbol>
  <symbol id="fcp2" viewBox="0 0 20 20"><path d="M0 7h19" stroke="#222" stroke-width="2"/><path d="M5 2h8v9H5z" fill="#4ca0cc" stroke="#123"/></symbol>
  <symbol id="layers" viewBox="0 0 20 20"><path d="M2 6l10-3 5 3v8L7 17l-5-3z" fill="#e2e2e2" stroke="#bbb"/><path d="M2 6l5 3 10-3M2 9l5 3 10-3M2 12l5 3 10-3" fill="none" stroke="#bbb"/></symbol>
  <symbol id="brush" viewBox="0 0 20 20"><path d="M18 1L8 9l-5 4q3 2 6 0l9-9z" fill="#ccc" stroke="#aaa"/><path d="M1 17h17v3H1z" fill="#ccc"/></symbol>
  <symbol id="lw" viewBox="0 0 20 20"><path d="M1 3h18M1 7h18" stroke="#bbb"/><path d="M1 12h18" stroke="#bbb" stroke-width="2"/><path d="M1 17h18" stroke="#bbb" stroke-width="3"/></symbol>
  <symbol id="lstyle" viewBox="0 0 20 20"><path d="M1 3h18" stroke="#bbb" stroke-width="2"/><path d="M1 7h18M1 11h18M1 15h18M1 18h18" stroke="#aaa" stroke-dasharray="3 1"/></symbol>
  <symbol id="hide" viewBox="0 0 20 20"><path d="M2 1v18" stroke="#bbb" stroke-width="2"/><path d="M18 1v18" stroke="#ddd"/><path d="M6 5h9M12 2l3 3-3 3M15 9H6M9 6L6 9l3 3" fill="none" stroke="#aaa"/><circle cx="12" cy="15" r="3" fill="#ccc"/></symbol>
  <symbol id="colors" viewBox="0 0 20 20"><path d="M2 1v12h17" fill="none" stroke="#222" stroke-width="2"/><path d="M3 5h7v8" fill="none" stroke="#2d8fae" stroke-width="2"/><path d="M1 16h5v4H1z" fill="#d22"/><path d="M6 16h4v4H6z" fill="#f0c020"/><path d="M10 16h5v4h-5z" fill="#2a6ad0"/><path d="M15 16h4v4h-4z" fill="#7a1fd0"/></symbol>
  <symbol id="tag" viewBox="0 0 20 20"><path d="M2 7l9-6 8 6-6 11-10-3z" fill="#eee" stroke="#444" stroke-width="1.400"/><path d="M5 8l8 8M9 5l7 5M8 10l5-4" stroke="#444" fill="none"/></symbol>
</svg>

<header class="topbar">
  <div class="menu-side">
    <a class="logo" href="#" aria-label="SOLIDWORKS">
      <svg viewBox="0 0 144 34">
        <g fill="none" stroke="#d9261c" stroke-width="2.500" stroke-linecap="round" stroke-linejoin="round">
          <path d="M15 2q9 0 9 2 0 3-9 6"/>
          <path d="M13 12q7 0 6 4-2 8-12 10l5-11"/>
          <path d="M30 11q-7 0-7 3 0 1 3 4 3 2 1 5-1 3-8 3"/>
        </g>
        <text x="37" y="26" class="logo-text"><tspan class="logo-bold">SOLID</tspan>WORKS</text>
      </svg>
    </a>
    <nav class="menu">
      <a href="#">Archivo</a><a href="#">Edición</a><a href="#">Ver</a><a href="#">Insertar</a><a href="#">Herramientas</a><a href="#">Ventana</a><a href="#">?</a>
    </nav>
    <button class="pin-btn" aria-label="Fijar"><svg><use href="#pin"/></svg></button>
  </div>
  <div class="quick">
    <button class="q" aria-label="Nuevo"><svg><use href="#new"/></svg></button><i class="dd"></i>
    <button class="q" aria-label="Abrir"><svg><use href="#open"/></svg></button><i class="dd"></i>
    <button class="q" aria-label="Guardar"><svg><use href="#save"/></svg></button><i class="dd"></i>
    <button class="q" aria-label="Imprimir"><svg><use href="#print"/></svg></button><i class="dd"></i>
    <button class="q" aria-label="Deshacer" disabled><svg><use href="#undo"/></svg></button><i class="dd off"></i>
    <button class="selector" aria-label="Seleccionar"><span><svg><use href="#cursor"/></svg></span><b><i class="dd"></i></b></button>
    <button class="q" aria-label="Reconstruir"><svg><use href="#traffic"/></svg></button>
    <button class="q" aria-label="Propiedades"><svg><use href="#props"/></svg></button>
    <button class="q" aria-label="Opciones"><svg><use href="#gear"/></svg></button><i class="dd"></i>
  </div>
  <h1 class="doc-title">Mi primera tubería.SLDASM</h1>
  <div class="search">
    <svg><use href="#cmd"/></svg>
    <input type="text" placeholder="Buscar comandos" aria-label="Buscar comandos">
    <button aria-label="Buscar"><svg class="mag"><use href="#mag"/></svg></button><i class="dd"></i>
  </div>
  <div class="win-btns">
    <button class="help" aria-label="Ayuda">?</button><i class="dd"></i>
    <button aria-label="Minimizar"><svg><use href="#wmin"/></svg></button>
    <button aria-label="Expandir"><svg><use href="#wspan"/></svg></button>
    <button aria-label="Restaurar"><svg><use href="#wrest"/></svg></button>
    <button aria-label="Cerrar"><svg><use href="#wclose"/></svg></button>
  </div>
</header>

<section class="ribbon" aria-label="Diseño">
  <button class="big w52"><svg><use href="#sketch"/></svg>Crear<br>diseño</button>
  <button class="big tall w62"><svg><use href="#dim"/></svg>Cota<br>inteligente<i class="dd"></i></button>
  <div class="sep"></div>
  <div class="sketch-grid">
    <button aria-label="Línea"><svg><use href="#line"/></svg></button><i class="dd"></i>
    <button aria-label="Círculo"><svg><use href="#circle"/></svg></button><i class="dd"></i>
    <button aria-label="Spline"><svg><use href="#spline"/></svg></button><i class="dd"></i>
    <button aria-label="Plano"><svg><use href="#plane"/></svg></button>
    <button aria-label="Rectángulo"><svg><use href="#rect"/></svg></button><i class="dd"></i>
    <button aria-label="Arco"><svg><use href="#arc"/></svg></button><i class="dd"></i>
    <button aria-label="Elipse"><svg><use href="#ellipse"/></svg></button><i class="dd"></i>
    <button aria-label="Texto"><svg><use href="#letter"/></svg></button>
    <button aria-label="Ranura"><svg><use href="#slot"/></svg></button><i class="dd"></i>
    <button aria-label="Polígono"><svg><use href="#hexa"/></svg></button><i class="dd none"></i>
    <button aria-label="Redondeo" disabled><svg><use href="#fillet"/></svg></button><i class="dd off"></i>
    <button aria-label="Punto"><svg><use href="#point"/></svg></button>
  </div>
  <div class="sep"></div>
  <button class="big tall w60" disabled><svg><use href="#trim"/></svg><u>R</u>ecortar<br>entidades<i class="dd off"></i></button>
  <button class="big tall w60"><svg><use href="#convert"/></svg>Convertir<br>entidades<i class="dd"></i></button>
  <button class="big w84" disabled><svg><use href="#offset"/></svg>Equidistanciar<br>entidades</button>
  <button class="big w84"><svg><use href="#surf"/></svg>Equidistanciar<br>en superficie</button>
  <div class="rows rows-wide">
    <button disabled><svg><use href="#mirror"/></svg>Simetría de entidades</button>
    <button disabled><svg><use href="#pattern"/></svg>Matriz lineal de croquis<i class="dd off"></i></button>
    <button disabled><svg><use href="#move"/></svg>Mover entidades<i class="dd off"></i></button>
  </div>
  <div class="sep"></div>
  <button class="big tall w106" disabled><svg><use href="#relat"/></svg>Visualizar/Eliminar<br>relaciones<i class="dd off"></i></button>
  <button class="big w48" disabled><svg><use href="#repair"/></svg>Reparar<br>croquis</button>
  <div class="sep"></div>
  <button class="big tall w56" disabled><svg><use href="#snap"/></svg>Capturas<br>rápidas<i class="dd off"></i></button>
  <div class="sep"></div>
  <div class="rows">
    <button disabled><svg><use href="#blk"/><use href="#star"/></svg>Crear bloque</button>
    <button disabled><svg><use href="#blk"/><use href="#pencil"/></svg>Editar bloque</button>
    <button><svg><use href="#blk"/><use href="#garrow"/></svg>Insertar bloque</button>
  </div>
  <div class="rows rows-mid">
    <button disabled><svg><use href="#blk"/><use href="#plus"/></svg>Agregar/Eliminar</button>
    <button disabled><svg><use href="#blk"/><use href="#disk"/></svg>Guardar bloque</button>
    <button disabled><svg><use href="#blk"/><use href="#burst"/></svg>Explosionar bloque</button>
  </div>
  <div class="sep"></div>
  <button class="big w70" disabled><svg><use href="#piece"/><use href="#star"/></svg>Crear pieza<br>desde<br>bloque</button>
  <button class="big tall w78"><svg><use href="#insert"/></svg>Insertar<br>componentes<i class="dd"></i></button>
  <button class="big w56" disabled><svg><use href="#clip"/></svg>Relación<br>de<br>posición</button>
  <button class="big w74"><svg><use href="#movec"/></svg>Mover<br>componente</button>
  <div class="sep"></div>
  <button class="big w78"><svg><use href="#showc"/></svg>Mostrar<br>componentes<br>ocultos</button>
</section>

<div class="workspace">
  <main class="main">
    <div class="tabs" role="tablist">
      <button role="tab">Ensamblaje</button>
      <button role="tab" class="active">Diseño</button>
      <button role="tab">Croquis</button>
      <button role="tab">Calcular</button>
      <button role="tab">Complementos de SOLIDWORKS</button>
      <button role="tab">Componentes eléctricos</button>
      <button role="tab">Sistema de tuberías</button>
      <button role="tab">Tuberías</button>
      <button role="tab">Recorrido definido por el usuario</button>
      <div class="mdi">
        <svg><use href="#wleft"/></svg><svg><use href="#wright"/></svg><svg><use href="#wmin"/></svg><svg><use href="#wrest"/></svg><svg><use href="#wclose"/></svg>
      </div>
    </div>

    <div class="body">
      <aside class="side">
        <div class="vbar">
          <div class="vbar-grip"></div>
          <svg><use href="#blk"/><use href="#star"/></svg>
          <svg><use href="#blk"/><use href="#pencil"/></svg>
          <svg class="on"><use href="#blk"/><use href="#garrow"/></svg>
          <svg><use href="#blk"/><use href="#plus"/></svg>
          <svg><use href="#blk"/><use href="#lamp"/></svg>
          <svg><use href="#blk"/><use href="#disk"/></svg>
          <svg><use href="#blk"/><use href="#burst"/></svg>
          <svg><use href="#belt"/></svg>
        </div>
        <div class="feature">
          <div class="handle"><span></span></div>
          <div class="ftabs">
            <button class="active" aria-label="Gestor de diseño"><svg><use href="#asm"/></svg></button>
            <button aria-label="Propiedades"><svg><use href="#proplist"/></svg></button>
            <button aria-label="Configuraciones"><svg><use href="#config"/></svg></button>
            <button aria-label="Cotas"><svg><use href="#target"/></svg></button>
            <button aria-label="Apariencias"><svg><use href="#ball"/></svg></button>
            <span class="more"></span>
          </div>
          <div class="filter"><svg><use href="#funnel"/></svg><i class="dd"></i></div>
          <ul class="ftree">
            <li class="root"><svg><use href="#asm"/></svg>Mi primera tubería&nbsp; (Predeterminado&lt;Es</li>
            <li><i></i><svg><use href="#fold"/><use href="#hist"/></svg>Historial</li>
            <li><i></i><svg><use href="#fold"/><use href="#sens"/></svg>Sensores</li>
            <li><i class="exp"></i><svg><use href="#fold"/><use href="#anno"/></svg>Anotaciones</li>
            <li><i></i><svg><use href="#fold"/><use href="#sigma"/></svg>Ecuaciones</li>
            <li><i></i><svg><use href="#refplane"/></svg>Alzado</li>
            <li><i></i><svg><use href="#refplane"/></svg>Planta</li>
            <li><i></i><svg><use href="#refplane"/></svg>Vista lateral</li>
            <li><i></i><svg><use href="#origin"/></svg>Origen</li>
            <li><i></i><svg><use href="#mates"/></svg>Relaciones de posición</li>
          </ul>
          <div class="rollback"></div>
          <div class="hscroll"><span class="arr left"></span><span class="thumb"></span><span class="arr right"></span></div>
        </div>
      </aside>

      <div class="viewport">
        <svg class="scene" viewBox="0 0 1215 873" preserveAspectRatio="xMinYMin meet">
          <!-- flange: disc with bore and eight bolt holes -->
          <path fill="#666600" stroke="#000" stroke-width="1.5" fill-rule="evenodd" d="
            M578 9.500a370.500 370.500 0 1 0 .1 0z
            M578 153a227 227 0 1 0 .1 0z
            M455.500 54a30 30 0 1 0 .1 0z M700.500 54a30 30 0 1 0 .1 0z
            M282 227.500a30 30 0 1 0 .1 0z M874 227.500a30 30 0 1 0 .1 0z
            M282 472.500a30 30 0 1 0 .1 0z M874 472.500a30 30 0 1 0 .1 0z
            M455.500 646a30 30 0 1 0 .1 0z M700.500 646a30 30 0 1 0 .1 0z"/>
          <circle cx="578" cy="380" r="255" fill="none" stroke="#000" stroke-width="1.300"/>
          <!-- pointer to the dialog -->
          <path class="pointer" d="M692 787L859 743L857 735L889 746L866 768L864 757L693 791Q690 789 692 787z"/>
          <!-- triad -->
          <path d="M38 788h4v26h-4z" fill="#4cae4c" stroke="#1a5c1a"/><path d="M36 794l4-9 4 9z" fill="#1a5c1a"/>
          <path d="M42 813h20v4H42z" fill="#e05a5a" stroke="#a01818"/><path d="M60 810l10 5-10 5z" fill="#a81818"/>
          <circle cx="40" cy="815" r="4.500" fill="#0000b4"/>
          <text x="40" y="782" text-anchor="middle" class="ax ax-y">Y</text>
          <text x="70" y="819" class="ax ax-x">X</text>
        </svg>
        <div class="hud">
          <svg><use href="#cube"/></svg><svg><use href="#zfit"/></svg><svg><use href="#zarea"/></svg><svg><use href="#prev"/></svg><svg><use href="#section"/></svg>
          <svg><use href="#vorient"/></svg><i class="dd off"></i>
          <svg><use href="#disp"/></svg><i class="dd off"></i>
          <svg><use href="#eye"/></svg><i class="dd off"></i>
          <svg><use href="#scale"/></svg><svg><use href="#ball"/><use href="#ypen"/></svg>
          <svg><use href="#checker"/><use href="#ball"/></svg><i class="dd off"></i>
          <svg><use href="#screen"/></svg><i class="dd off"></i>
        </div>
        <div class="flyout"></div>
        <div class="view-name">*Frontal</div>

        <div class="taskpane">
          <button aria-label="Inicio"><svg><use href="#home"/></svg></button>
          <button class="active" aria-label="Biblioteca de diseño"><svg><use href="#books"/></svg></button>
          <button aria-label="Explorador"><svg><use href="#folder"/></svg></button>
          <button aria-label="Paleta de visualización"><svg><use href="#palette"/></svg></button>
          <button aria-label="Apariencias"><svg><use href="#ball"/></svg></button>
          <button aria-label="Propiedades personalizadas"><svg><use href="#proplist"/></svg></button>
          <button aria-label="Foro"><svg><use href="#globe"/></svg></button>
          <button aria-label="Tubería"><svg><use href="#pipe"/></svg></button>
          <button aria-label="Buscar tubería"><svg><use href="#pfind"/></svg></button>
        </div>

        <div class="dialog" role="dialog" aria-labelledby="dlg-title">
          <div class="dlg-head">
            <h2 id="dlg-title">Seleccionar configuración</h2>
            <button class="dlg-close" aria-label="Cerrar"><svg viewBox="0 0 12 10"><path d="M1 1h3l2 2 2-2h3L8 5l3 4H8L6 7 4 9H1l3-4z" fill="#fff" stroke="#555"/></svg></button>
          </div>
          <div class="dlg-body">
            <label for="cfg">Seleccione la configuración que desee utilizar:</label>
            <div class="listbox">
              <select id="cfg" size="7">
                <option>Slip On Flange 150-NPS2.5</option>
                <option>Slip On Flange 150-NPS3</option>
                <option>Slip On Flange 150-NPS3.5</option>
                <option>Slip On Flange 150-NPS4</option>
                <option>Slip On Flange 150-NPS5</option>
                <option selected>Slip On Flange 150-NPS6</option>
                <option>Slip On Flange 150-NPS8</option>
              </select>
              <div class="vscroll"><span class="arr up"></span><span class="thumb"></span><span class="arr down"></span></div>
            </div>
            <div class="check"><input type="checkbox" id="all" checked disabled><label for="all">Listar todas las configuraciones</label></div>
            <div class="dlg-btns"><button>Aceptar</button><button>Cancelar</button></div>
          </div>
        </div>
      </div>
    </div>

    <div class="model-tabs">
      <div class="nav"><span><i class="arr left"></i></span><span><i class="arr left"></i></span><span><i class="arr right"></i></span><span><i class="arr right"></i></span></div>
      <button class="active">Modelo</button>
      <button>Estudio de movimiento 1</button>
    </div>
  </main>

  <aside class="library">
    <div class="lib-title"><span class="collapse"></span><h2>Biblioteca de diseño</h2><svg><use href="#pin"/></svg></div>
    <div class="lib-tools">
      <button aria-label="Atrás"><svg><use href="#back"/></svg></button>
      <button aria-label="Adelante" disabled><svg><use href="#fwd"/></svg></button>
      <i class="dd"></i>
      <button aria-label="Agregar a biblioteca"><svg><use href="#books"/><use href="#gplus"/></svg></button>
      <button aria-label="Agregar ubicación"><svg><use href="#books"/><use href="#spark"/></svg></button>
      <button aria-label="Crear carpeta"><svg><use href="#folder"/><use href="#spark"/></svg></button>
      <button aria-label="Actualizar"><svg><use href="#sync"/></svg></button>
      <button aria-label="Subir"><svg><use href="#up"/></svg></button>
      <button aria-label="Toolbox"><svg><use href="#bolt"/></svg></button>
    </div>
    <div class="lib-tree">
      <ul>
        <li class="l0 shut"><i></i><span><svg><use href="#sw"/></svg>Contenido de SOLIDWORKS</span></li>
        <li class="l0 open"><i></i><span><svg><use href="#books"/></svg>Design Library</span></li>
        <li class="l1"><i></i><span><svg><use href="#folder"/></svg>annotations</span></li>
        <li class="l1 shut"><i></i><span><svg><use href="#folder"/></svg>assemblies</span></li>
        <li class="l1 shut"><i></i><span><svg><use href="#folder"/></svg>features</span></li>
        <li class="l1 shut"><i></i><span><svg><use href="#form"/></svg>forming tools</span></li>
        <li class="l1"><i></i><span><svg><use href="#folder"/></svg>motion</span></li>
        <li class="l1 shut"><i></i><span><svg><use href="#folder"/></svg>parts</span></li>
        <li class="l1 open"><i></i><span><svg><use href="#folder"/></svg>routing</span></li>
        <li class="l2 shut"><i></i><span><svg><use href="#folder"/></svg>assembly fittings</span></li>
        <li class="l2"><i></i><span><svg><use href="#folder"/></svg>conduit</span></li>
        <li class="l2 shut"><i></i><span><svg><use href="#folder"/></svg>electrical</span></li>
        <li class="l2 shut"><i></i><span><svg><use href="#folder"/></svg>hvac</span></li>
        <li class="l2"><i></i><span><svg><use href="#folder"/></svg>miscellaneous fittings</span></li>
        <li class="l2 open"><i></i><span><svg><use href="#folder"/></svg>piping</span></li>
        <li class="l3"><i></i><span><svg><use href="#folder"/></svg>crosses</span></li>
        <li class="l3 shut"><i></i><span><svg><use href="#folder"/></svg>elbows</span></li>
        <li class="l3"><i></i><span><svg><use href="#folder"/></svg>equipment</span></li>
        <li class="l3 selected"><i></i><span><svg><use href="#folder"/></svg>flanges</span></li>
        <li class="l3"><i></i><span><svg><use href="#folder"/></svg>gaskets</span></li>
        <li class="l3"><i></i><span><svg><use href="#folder"/></svg>nipples</span></li>
        <li class="l3"><i></i><span><svg><use href="#folder"/></svg>o-lets</span></li>
        <li class="l3"><i></i><span><svg><use href="#folder"/></svg>pipes</span></li>
        <li class="l3"><i></i><span><svg><use href="#folder"/></svg>reducers</span></li>
        <li class="l3"><i></i><span><svg><use href="#folder"/></svg>tees</span></li>
        <li class="l3"><i></i><span><svg><use href="#folder"/></svg>threaded fittings (npt)</span></li>
        <li class="l3"><i></i><span><svg><use href="#folder"/></svg>valves</span></li>
      </ul>
      <div class="vscroll"><span class="arr up"></span><span class="thumb long"></span><span class="arr down"></span></div>
    </div>
    <div class="lib-split"></div>
    <div class="previews">
      <figure class="current"><svg><use href="#flg1"/></svg><figcaption>slip on weld<br>flange</figcaption></figure>
      <figure><svg><use href="#flg2"/></svg><figcaption>socket weld<br>flange</figcaption></figure>
      <figure><svg><use href="#flg3"/></svg><figcaption>welding neck<br>flange</figcaption></figure>
    </div>
  </aside>
</div>

<div class="bottombar">
  <div class="grip"></div>
  <div class="tools first">
    <button aria-label="Filtro" disabled><svg><use href="#f0"/></svg></button>
    <button aria-label="Borrar filtros" disabled><svg class="pale"><use href="#f3"/></svg></button>
    <button aria-label="Todos los filtros"><svg class="purple"><use href="#f3"/></svg></button>
  </div>
  <button class="selector wide" aria-label="Seleccionar"><span><svg><use href="#cursor"/></svg></span><b><i class="dd"></i></b></button>
  <div class="tools"><button aria-label="Selección inversa" disabled><svg><use href="#curs2"/></svg></button></div>
  <div class="bsep"></div>
  <div class="tools filters">
    <button aria-label="Vértices"><svg><use href="#vtx"/><use href="#fn"/></svg></button>
    <button aria-label="Aristas"><svg><use href="#edge"/><use href="#fn"/></svg></button>
    <button aria-label="Caras"><svg><use href="#face"/><use href="#fn"/></svg></button>
    <button aria-label="Superficies"><svg><use href="#sbody"/><use href="#fn"/></svg></button>
    <button aria-label="Sólidos"><svg><use href="#solid"/><use href="#fn"/></svg></button>
    <button aria-label="Ejes"><svg><use href="#axis"/><use href="#fn"/></svg></button>
    <button aria-label="Planos"><svg><use href="#fplane"/><use href="#fn"/></svg></button>
    <button aria-label="Puntos"><svg><use href="#fpt"/><use href="#fn"/></svg></button>
    <button aria-label="Croquis"><svg><use href="#fsk"/><use href="#fn"/></svg></button>
    <button aria-label="Segmentos"><svg><use href="#fseg"/><use href="#fn"/></svg></button>
    <button aria-label="Puntos medios"><svg><use href="#fmid"/><use href="#fn"/></svg></button>
    <button aria-label="Centros"><svg><use href="#fctr"/><use href="#fn"/></svg></button>
    <button aria-label="Líneas constructivas"><svg><use href="#fcl"/><use href="#fn"/></svg></button>
    <button aria-label="Cotas"><svg><use href="#fdim"/><use href="#fn"/></svg></button>
    <button aria-label="Acabados"><svg><use href="#froot"/><use href="#fn"/></svg></button>
    <button aria-label="Tolerancias"><svg><use href="#fgtol"/><use href="#fn"/></svg></button>
    <button aria-label="Notas"><svg><use href="#fmagn"/><use href="#fn"/></svg></button>
    <button aria-label="Referencias"><svg><use href="#fdat"/><use href="#fn"/></svg></button>
    <button aria-label="Soldaduras"><svg><use href="#fweld"/><use href="#fn"/></svg></button>
    <button aria-label="Cordones"><svg><use href="#fbead"/><use href="#fn"/></svg></button>
    <button aria-label="Objetivos"><svg><use href="#fobj"/><use href="#fn"/></svg></button>
    <button aria-label="Roscas"><svg><use href="#fcos"/><use href="#fn"/></svg></button>
    <button aria-label="Bloques"><svg><use href="#blk"/><use href="#fn"/></svg></button>
    <button aria-label="Centro de masa"><svg><use href="#fcm"/><use href="#fn"/></svg></button>
    <button aria-label="Puntos de conexión"><svg><use href="#fcp1"/><use href="#fn"/></svg></button>
    <button aria-label="Puntos de recorrido"><svg><use href="#fcp2"/><use href="#fn"/></svg></button>
  </div>
  <div class="bsep"></div><div class="grip"></div>
  <div class="tools format">
    <button aria-label="Propiedades de capa" disabled><svg><use href="#layers"/><use href="#pencil"/></svg></button>
    <button aria-label="Capas" disabled><svg><use href="#layers"/></svg></button>
    <button aria-label="Color de línea" disabled><svg><use href="#brush"/></svg></button>
    <button aria-label="Espesor de línea" disabled><svg><use href="#lw"/></svg></button>
    <button aria-label="Estilo de línea" disabled><svg><use href="#lstyle"/></svg></button>
    <button aria-label="Ocultar aristas" disabled><svg><use href="#hide"/></svg></button>
    <button aria-label="Modo de color"><svg><use href="#colors"/></svg></button>
  </div>
  <div class="bsep"></div><div class="grip"></div>
  <div class="layer"><select aria-label="Capa" disabled><option></option></select><i class="dd off"></i></div>
  <div class="tools"><button aria-label="Capas" disabled><svg><use href="#layers"/></svg></button></div>
  <div class="bsep last"></div>
</div>

<footer class="status">
  <span class="edition">SOLIDWORKS Premium 2017 x64 Edition</span>
  <span class="cell">Insuficientemente definida</span>
  <span class="cell mode">Editando Ensamblaje</span>
  <span class="cell gap"></span>
  <span class="units">MMGS</span>
  <span class="arr up"></span>
  <svg class="tag"><use href="#tag"/></svg>
</footer>

</body>
</html>
```
FILE: styles.css
```css
*{
  margin: 0;
  padding: 0;
  box-sizing: border-box;
}

body{
  height: 100vh;
  display: flex;
  flex-direction: column;
  overflow: hidden;
  background-color: #f7f7f7;
  color: #000;
  font-family: "Open Sans", "Noto Sans", sans-serif;
  font-size: 11px;
  line-height: 13px;
}

button{
  border: none;
  background: none;
  font: inherit;
  color: inherit;
}
button:disabled{
  color: #b4b4b4;
}
a{
  color: inherit;
  text-decoration: none;
}
h1, h2{
  font-size: inherit;
  font-weight: 400;
}
ul{
  list-style: none;
}
svg{
  width: 18px;
  height: 18px;
  flex: none;
  display: block;
}
.sprite{
  display: none;
}
.gradients{
  width: 0;
  height: 0;
  position: absolute;
}

/* small triangles */
.dd, .arr{
  flex: none;
  width: 0;
  height: 0;
  border: 3px solid transparent;
}
.dd{
  border-top: 4px solid #333;
  border-bottom: none;
}
.dd.off{
  border-top-color: #999;
}
.dd.none{
  visibility: hidden;
}
.arr.up{
  border-bottom: 4px solid #333;
  border-top: none;
}
.arr.down{
  border-top: 4px solid #333;
  border-bottom: none;
}
.arr.left{
  border-right: 4px solid #333;
  border-left: none;
}
.arr.right{
  border-left: 4px solid #333;
  border-right: none;
}

/* top bar */
.topbar{
  height: 31px;
  flex: none;
  display: flex;
  align-items: center;
  background-color: #e5e5e5;
  border-bottom: 1px solid #808080;
}
.menu-side{
  width: 576px;
  height: 30px;
  display: flex;
  align-items: center;
  background-color: #f7f7f7;
  border-right: 1px solid #808080;
  padding-left: 10px;
}
.logo{
  width: 145px;
  height: 35px;
  align-self: flex-start;
  z-index: 2;
  border: 1px solid #999;
  border-top: none;
  background: linear-gradient(160deg, #fff 30%, #d8d8da);
}
.logo svg{
  width: 143px;
  height: 34px;
}
.logo-text{
  font-size: 16px;
  font-style: italic;
  fill: #d9261c;
}
.logo-bold{
  font-weight: 800;
}
.menu{
  display: flex;
  gap: 15px;
  margin-left: 28px;
}
.pin-btn{
  margin-left: auto;
  margin-right: 8px;
  color: #2c7fb8;
}
.pin-btn svg{
  width: 14px;
  height: 14px;
}
.quick{
  display: flex;
  align-items: center;
  margin-left: 13px;
}
.q{
  width: 26px;
  display: flex;
  justify-content: center;
}
.quick > .dd{
  margin: 0 3px 0 4px;
}
.selector{
  height: 26px;
  display: flex;
  border: 1px solid #777;
  margin-right: 1px;
}
.selector span{
  width: 25px;
  display: grid;
  place-items: center;
  background-color: #acacac;
}
.selector b{
  width: 12px;
  display: grid;
  place-items: center;
  background-color: #e9e9e9;
}
.selector.wide span{
  width: 28px;
}
.selector.wide b{
  width: 13px;
}
.doc-title{
  flex: 1;
  text-align: center;
}
.search{
  width: 252px;
  height: 22px;
  display: flex;
  align-items: center;
  background-color: #f0f0f2;
  border: 2px solid #ccc;
  padding: 0 3px;
}
.search svg{
  width: 16px;
  height: 16px;
}
.search svg.mag{
  width: 20px;
  height: 20px;
}
.search input{
  flex: 1;
  min-width: 0;
  border: none;
  background: none;
  font: inherit;
  padding-left: 7px;
}
.search input::placeholder{
  color: #555;
}
.search .dd{
  margin-left: 4px;
}
.win-btns{
  display: flex;
  align-items: center;
  width: 149px;
  padding-left: 8px;
  color: #444;
}
.win-btns button{
  width: 26px;
  display: grid;
  place-items: center;
}
.win-btns svg{
  width: 15px;
  height: 15px;
}
.win-btns .help{
  width: 20px;
  font-size: 18px;
  line-height: 20px;
  font-weight: 700;
}
.win-btns .dd{
  margin: 0 5px;
}

/* ribbon */
.ribbon{
  height: 87px;
  flex: none;
  display: flex;
  border-bottom: 1px solid #808080;
  padding-top: 6px;
}
.sep{
  width: 1px;
  height: 78px;
  margin: 0 1px;
  background-color: #c4c4c4;
}
.big{
  flex: none;
  align-self: flex-start;
  padding-top: 12px;
  white-space: nowrap;
}
.big svg{
  margin: 0 auto 1px;
}
.big.tall{
  padding-top: 5px;
}
.big .dd{
  display: block;
  margin: 13px auto 0;
  width: 6px;
}
.w48{ width: 49px; }
.w52{ width: 52px; }
.w56{ width: 56px; }
.w60{ width: 61px; }
.w62{ width: 63px; }
.w70{ width: 69px; }
.w74{ width: 74px; }
.w78{ width: 79px; }
.w84{ width: 84px; }
.w106{ width: 105px; }
.sketch-grid{
  display: grid;
  grid-template-columns: 24px 16px 24px 16px 24px 16px 24px;
  grid-auto-rows: 26px;
  place-items: center;
  margin-right: 2px;
}
.sketch-grid svg{
  width: 20px;
  height: 20px;
}
.rows{
  width: 117px;
  padding-left: 2px;
  display: grid;
  grid-auto-rows: 26px;
}
.rows button{
  display: flex;
  align-items: center;
  gap: 8px;
  white-space: nowrap;
}
.rows .dd{
  margin-left: auto;
  margin-right: 6px;
}
.rows-wide{
  width: 185px;
}
.rows-mid{
  width: 138px;
}
.sketch-grid, .rows{
  margin-top: -1px;
}

/* workspace */
.workspace{
  flex: 1;
  min-height: 0;
  display: flex;
}
.main{
  flex: 1;
  min-width: 0;
  display: flex;
  flex-direction: column;
  border-right: 3px solid #f7f7f7;
  background:
    linear-gradient(to bottom, rgba(255,255,255,0) 52%, #fff 71%, #fff 85%, #f3f4f9),
    radial-gradient(ellipse 58% 70% at 20% 0%, #fff 45%, rgba(255,255,255,0)),
    linear-gradient(to bottom, #f2f3f8, #dcdfe9 32%);
}
.tabs{
  height: 22px;
  flex: none;
  display: flex;
}
.tabs button{
  background-color: #d2d2d2;
  border-right: 1px solid #808080;
  border-bottom: 1px solid #808080;
  padding: 0 9px;
  white-space: nowrap;
  color: #222;
}
.tabs button:first-child{
  padding: 0 8px;
}
.tabs .active{
  background-color: #f7f7f7;
  border-bottom-color: #f7f7f7;
  font-weight: 700;
}
.mdi{
  margin-left: auto;
  display: flex;
  gap: 12px;
  padding: 8px 12px 0 0;
  color: #999;
}
.mdi svg{
  width: 14px;
  height: 14px;
}
.body{
  flex: 1;
  min-height: 0;
  display: flex;
}
.side{
  width: 270px;
  display: flex;
  background-color: #f7f7f7;
  border-right: 1px solid #808080;
}
.vbar{
  width: 31px;
  align-self: flex-start;
  display: flex;
  flex-direction: column;
  align-items: center;
  gap: 8px;
  padding-bottom: 10px;
  border-bottom: 1px solid #808080;
  color: #c4c4c4;
}
.vbar .on{
  color: #333;
}
.vbar-grip{
  width: 26px;
  height: 2px;
  margin: 2px 0 4px;
  border-top: 2px dotted #999;
}
.feature{
  flex: 1;
  min-width: 0;
  display: flex;
  flex-direction: column;
  margin: 2px 2px 0 1px;
}
.handle{
  height: 16px;
  margin-bottom: 4px;
  border-top: 1px solid #c4c4c4;
  border-bottom: 1px solid #c4c4c4;
  display: grid;
  place-items: center;
}
.handle span{
  width: 6px;
  height: 6px;
  border: 1px solid #888;
  border-radius: 50%;
  background-color: #ccc;
}
.ftabs{
  height: 26px;
  display: flex;
}
.ftabs button{
  width: 40px;
  display: grid;
  place-items: center;
  background-color: #d2d2d2;
  border: 1px solid #808080;
  border-left: none;
}
.ftabs .active{
  background-color: #f7f7f7;
  border-bottom: none;
}
.more{
  width: 8px;
  height: 8px;
  margin: 8px 0 0 20px;
  border: 2px solid #666;
  border-left: none;
  border-bottom: none;
  transform: rotate(45deg);
}
.filter{
  height: 26px;
  margin: 0 1px 0 3px;
  border: 1px solid #c4c4c4;
  display: flex;
  align-items: center;
  gap: 1px;
  padding-left: 2px;
}
.ftree li{
  height: 22px;
  display: flex;
  align-items: center;
  gap: 5px;
  white-space: nowrap;
  overflow: hidden;
}
.ftree .root{
  padding-left: 3px;
}
.ftree i{
  width: 5px;
  height: 0;
  margin: 0 9px 0 6px;
}
.ftree .exp{
  border: 4px solid transparent;
  border-left: 5px solid #666;
  border-right: none;
}
.rollback{
  height: 3px;
  background-color: #2080c0;
  border-bottom: 1px solid #0a0aa0;
}
.hscroll{
  margin-top: auto;
  height: 15px;
  margin-bottom: 2px;
  display: flex;
  align-items: center;
  background-color: #ececec;
  padding: 0 5px;
}
.hscroll .thumb{
  width: 128px;
  height: 15px;
  margin-left: 8px;
  border: 1px solid #999;
  border-radius: 2px;
  background:
    repeating-linear-gradient(to right, #555 0 1px, transparent 1px 3px) center / 8px 7px no-repeat,
    linear-gradient(#f4f4f4, #d2d2d2);
}
.hscroll .right{
  margin-left: auto;
}

/* graphics area */
.viewport{
  flex: 1;
  min-width: 0;
  position: relative;
}
.scene{
  width: 100%;
  height: 100%;
}
.pointer{
  fill: #fa1464;
  filter: drop-shadow(1px 3px 2px rgba(0,0,0,.4));
}
.ax{
  font-size: 11px;
}
.ax-y{
  fill: #2c8a0c;
}
.ax-x{
  fill: #e02020;
}
.hud{
  position: absolute;
  top: 6px;
  left: 418px;
  display: flex;
  align-items: center;
  gap: 8px;
  opacity: .9;
}
.hud .dd{
  margin: 0 -1px;
}
.hud .dd + svg{
  margin-left: 2px;
}
.flyout{
  position: absolute;
  left: -1px;
  top: 406px;
  width: 10px;
  height: 40px;
  background: radial-gradient(circle at center, #aaa 2px, #f7f7f7 3px);
  border: 1px solid #999;
  border-left: none;
}
.view-name{
  position: absolute;
  left: 11px;
  bottom: 3px;
  font-family: "Lato", sans-serif;
  font-size: 13px;
  font-weight: 900;
}
.taskpane{
  position: absolute;
  right: -3px;
  top: 27px;
  width: 26px;
  border: 1px solid #808080;
  border-right: none;
}
.taskpane button{
  width: 25px;
  height: 24px;
  display: grid;
  place-items: center;
  background-color: #d2d2d2;
  border-bottom: 1px solid #808080;
  border-right: 1px solid #808080;
}
.taskpane button:last-child{
  border-bottom: none;
}
.taskpane .active{
  background-color: #f7f7f7;
  border-right-color: #f7f7f7;
}

/* configuration dialog */
.dialog{
  position: absolute;
  right: 14px;
  bottom: 39px;
  width: 295px;
  padding: 0 6px 6px;
  border: 1px solid #4c5058;
  border-radius: 6px;
  background: linear-gradient(to right, #e4eefa, #dce6f2 60%, #e8f1fb);
  box-shadow: 1px 2px 5px rgba(0,0,0,.5);
}
.dlg-head{
  height: 28px;
  display: flex;
  justify-content: space-between;
}
.dlg-head h2{
  font-size: 12px;
  line-height: 28px;
}
.dlg-close{
  width: 47px;
  height: 18px;
  display: grid;
  place-items: center;
  border: 1px solid #98a4b4;
  border-top: none;
  border-radius: 0 0 4px 4px;
}
.dlg-close svg{
  width: 12px;
  height: 10px;
}
.dlg-body{
  padding: 11px 11px 13px 12px;
  background-color: #f0f0f0;
  border: 1px solid #808890;
}
.dlg-body label{
  white-space: nowrap;
}
.listbox{
  height: 93px;
  margin: 9px 0 7px 0;
  display: flex;
  background-color: #fff;
  border: 1px solid #828790;
  padding: 1px;
}
.listbox select{
  flex: 1;
  height: 89px;
  border: none;
  outline: none;
  overflow: hidden;
  font: inherit;
  color: #000;
  background-color: #fff;
}
.listbox option{
  height: 13px;
  min-height: 13px;
  padding: 0 2px;
  line-height: 13px;
}
.listbox option:checked{
  background: linear-gradient(#3399ff, #3399ff);
  color: #fff;
}
.vscroll{
  width: 16px;
  display: flex;
  flex-direction: column;
  align-items: center;
  background-color: #f0f0f0;
  padding: 7px 0;
}
.vscroll .thumb{
  width: 15px;
  height: 15px;
  margin-top: 10px;
  border: 1px solid #999;
  border-radius: 2px;
  background: linear-gradient(to right, #f6f6f6, #c8c8c8);
}
.vscroll .down{
  margin-top: auto;
}
.check{
  display: flex;
  align-items: center;
  gap: 3px;
  color: #777;
}
.check input{
  appearance: none;
  width: 13px;
  height: 13px;
  border: 1px solid #b4b4b4;
  background-color: #f8f8f8;
  display: grid;
  place-items: center;
}
.check input:checked::before{
  content: "";
  width: 4px;
  height: 8px;
  border: 2px solid #aaa;
  border-top: none;
  border-left: none;
  transform: rotate(40deg);
}
.dlg-btns{
  display: flex;
  justify-content: center;
  gap: 24px;
  margin-top: 9px;
  padding-left: 3px;
}
.dlg-btns button{
  width: 73px;
  height: 21px;
  border: 1px solid #707070;
  border-radius: 3px;
  background: linear-gradient(#f3f3f3 50%, #d8d8d8);
}

/* model / motion tabs */
.model-tabs{
  height: 15px;
  flex: none;
  display: flex;
  align-items: stretch;
  background-color: #f7f7f7;
  border-top: 1px solid #808080;
  padding-left: 59px;
}
.nav{
  width: 65px;
  display: flex;
  border-top: 1px solid #444;
}
.nav span{
  flex: 1;
  display: grid;
  place-items: center;
  background-color: #acacac;
  border-right: 1px solid #888;
}
.nav .left{
  border-right-color: #808080;
}
.nav .right{
  border-left-color: #808080;
}
.model-tabs button{
  line-height: 12px;
}
.model-tabs .active{
  font-weight: 700;
  padding: 0 9px 0 12px;
}
.model-tabs button:last-child{
  padding: 0 18px 0 11px;
  background-color: #d2d2d2;
  border: 1px solid #999;
  border-top: none;
  border-bottom: none;
}

/* design library */
.library{
  width: 433px;
  flex: none;
  display: flex;
  flex-direction: column;
  border-left: 1px solid #808080;
  border-right: 1px solid #5a96c8;
}
.lib-title{
  height: 22px;
  display: flex;
  align-items: center;
  background-color: #acacb0;
  border-bottom: 1px solid #222;
  padding: 0 4px 0 10px;
}
.lib-title h2{
  flex: 1;
  text-align: center;
  font-weight: 700;
  color: #111;
}
.lib-title svg{
  width: 14px;
  height: 14px;
  color: #222;
}
.collapse::before{
  content: "«";
  font-size: 18px;
  font-weight: 700;
  color: #222;
}
.lib-tools{
  height: 40px;
  display: flex;
  align-items: flex-start;
  padding: 7px 0 0 5px;
}
.lib-tools button{
  width: 27px;
  display: grid;
  place-items: center;
}
.lib-tools .dd{
  margin: 6px 2px 0 5px;
}
.lib-tree{
  height: 596px;
  display: flex;
  justify-content: space-between;
}
.lib-tree ul{
  padding-left: 11px;
}
.lib-tree li{
  height: 22px;
  display: flex;
  align-items: center;
}
.lib-tree li > i{
  width: 12px;
  height: 12px;
  margin-right: 2px;
  display: grid;
  place-items: center;
}
.lib-tree .shut > i::before{
  content: "▷";
  font-family: "DejaVu Sans", sans-serif;
  font-style: normal;
  font-size: 10px;
  color: #888;
}
.lib-tree .open > i::before{
  content: "◢";
  font-family: "DejaVu Sans", sans-serif;
  font-style: normal;
  font-size: 9px;
  color: #333;
}
.lib-tree li > span{
  height: 22px;
  display: flex;
  align-items: center;
  gap: 5px;
  padding: 0 3px;
  border: 1px solid transparent;
  border-radius: 2px;
  white-space: nowrap;
}
.lib-tree li svg{
  width: 20px;
}
.lib-tools svg{
  width: 19px;
  height: 19px;
}
.l1{
  padding-left: 23px;
}
.l2{
  padding-left: 46px;
}
.l3{
  padding-left: 69px;
}
.lib-tree .selected > span{
  border-color: #7da2ce;
  background: linear-gradient(#f0f6fd, #cfe2f8);
}
.lib-tree .vscroll{
  width: 14px;
}
.lib-tree .vscroll .thumb{
  width: 14px;
  height: 458px;
  margin-top: 7px;
  background:
    repeating-linear-gradient(to bottom, #555 0 1px, transparent 1px 3px) center / 7px 8px no-repeat,
    linear-gradient(to right, #f6f6f6, #cfcfcf);
}
.lib-split{
  height: 5px;
  margin: 2px 0 0 4px;
  background-color: #d8dce4;
  border-top: 2px solid #9ca2b0;
  border-bottom: 2px solid #666c88;
}
.previews{
  display: flex;
  padding: 14px 0 0 2px;
}
.previews figure{
  width: 93px;
  display: flex;
  flex-direction: column;
  align-items: center;
}
.previews svg{
  width: 25px;
  height: 25px;
}
.previews figcaption{
  margin-top: 5px;
  padding: 1px 2px;
  text-align: center;
  line-height: 15px;
}
.previews .current figcaption{
  background-color: #efefef;
}

/* selection filter bar */
.bottombar{
  height: 34px;
  flex: none;
  display: flex;
  align-items: center;
  padding-top: 3px;
  border-bottom: 1px solid #808080;
}
.grip{
  width: 5px;
  height: 26px;
  border-right: 3px dotted #aaa;
}
.tools{
  display: flex;
}
.tools button{
  width: 27px;
  display: grid;
  place-items: center;
}
.tools.first{
  padding-left: 8px;
}
.tools.filters{
  padding: 0 2px 0 7px;
  color: #222;
}
.tools.format{
  padding: 0 6px 0 8px;
}
.pale{
  color: #ccc;
}
.purple{
  color: #7a2a96;
}
.bsep{
  width: 1px;
  height: 30px;
  margin-left: 1px;
  background-color: #888;
}
.bsep.last{
  margin-left: 7px;
}
.layer{
  display: flex;
  align-items: center;
  width: 98px;
  height: 24px;
  margin: 0 0 0 8px;
  border: 1px solid #aaa;
  border-radius: 3px;
}
.layer select{
  flex: 1;
  appearance: none;
  border: none;
  background: none;
}
.layer .dd{
  margin-right: 5px;
}

/* status bar */
.status{
  height: 17px;
  flex: none;
  display: flex;
  align-items: center;
  background-color: #e5e5e5;
  padding-left: 1px;
}
.edition{
  margin-right: auto;
}
.cell{
  height: 17px;
  line-height: 17px;
  padding-right: 7px;
  border-right: 1px solid #ccc;
}
.mode{
  padding-left: 10px;
}
.gap{
  width: 17px;
}
.units{
  margin: 0 40px 0 54px;
}
.tag{
  width: 16px;
  height: 16px;
  margin: 0 5px 0 69px;
}
```
